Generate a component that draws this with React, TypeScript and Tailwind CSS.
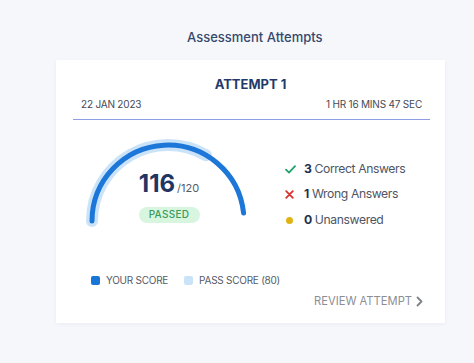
import React from "react";

// score gauge: half circle, radius 76, centre at (88, 86)
const CX = 88;
const CY = 86;
const R = 76;

function arcPath(fraction: number) {
  const a = Math.PI * (1 - fraction);
  const x = CX + R * Math.cos(a);
  const y = CY - R * Math.sin(a);
  return `M ${CX - R} ${CY} A ${R} ${R} 0 0 1 ${x.toFixed(2)} ${y.toFixed(2)}`;
}

function Gauge({ score, total, pass }: { score: number; total: number; pass: number }) {
  return (
    <div className="relative w-[176px] h-[100px] shrink-0">
      <svg className="absolute inset-0" width="176" height="100" viewBox="0 0 176 100">
        <path d={arcPath(pass / total)} fill="none" stroke="#cbe3f8" strokeWidth="12" strokeLinecap="round" />
        <path d={arcPath(score / total)} fill="none" stroke="#1c77d8" strokeWidth="5" strokeLinecap="round" />
      </svg>
      <div className="relative flex flex-col items-center pt-[37px] pl-[2px]">
        <div className="flex items-baseline">
          <span className="text-[24px] leading-[24px] font-bold text-[#1f3563]">{score}</span>
          <span className="ml-[2px] text-[11px] text-[#555b66]">/{total}</span>
        </div>
        <span className="mt-[10px] h-[16px] w-[61px] flex items-center justify-center rounded-full bg-[#d8f6df] text-[10px] tracking-[0.3px] font-medium text-[#3b9a5c]">
          PASSED
        </span>
      </div>
    </div>
  );
}

function ResultRow({ icon, count, label }: { icon: React.ReactNode; count: number; label: string }) {
  return (
    <div className="flex items-center h-[20px]">
      <span className="w-[19px] flex items-center">{icon}</span>
      <span className="text-[12.2px] tracking-[-0.4px] text-[#4f5563]">
        <b className="font-bold text-[#1f2f52]">{count}</b> {label}
      </span>
    </div>
  );
}

export default function App() {
  return (
    <div className="w-[474px] h-[363px] bg-[#f6f7fb] font-['Inter',sans-serif] pt-[27px]">
      <h1 className="ml-[187px] text-[13px] leading-[20px] font-medium text-[#35486e]">Assessment Attempts</h1>

      <div className="mt-[13px] ml-[56px] w-[389px] h-[263px] bg-white shadow-[0_1px_4px_rgba(60,70,110,0.06)] flex flex-col">
        <p className="pt-[14px] text-center text-[13px] leading-[20px] font-bold text-[#1f3a6b]">ATTEMPT 1</p>

        <div className="ml-[17px] mr-[15px] mt-[2px] border-b border-[#8e9ee6] pb-[7px]">
          <div className="flex justify-between px-[8px] text-[10px] tracking-[-0.2px] leading-[16px] text-[#454a55]">
            <span>22 JAN 2023</span>
            <span>1 HR 16 MINS 47 SEC</span>
          </div>
        </div>

        <div className="flex mt-[15px] ml-[24px]">
          <Gauge score={116} total={120} pass={80} />
          <div className="ml-[29px] mt-[24px] flex flex-col gap-[5.5px]">
            <ResultRow
              count={3}
              label="Correct Answers"
              icon={
                <svg width="11" height="9" viewBox="0 0 11 9">
                  <path d="M1 4.6 L4 7.6 L10 1.2" fill="none" stroke="#22a36b" strokeWidth="1.8" strokeLinecap="round" strokeLinejoin="round" />
                </svg>
              }
            />
            <ResultRow
              count={1}
              label="Wrong Answers"
              icon={
                <svg width="9" height="9" viewBox="0 0 9 9">
                  <path d="M1.2 1.2 L7.8 7.8 M7.8 1.2 L1.2 7.8" fill="none" stroke="#d8312f" strokeWidth="1.8" strokeLinecap="round" />
                </svg>
              }
            />
            <ResultRow
              count={0}
              label="Unanswered"
              icon={<span className="ml-[1px] w-[7px] h-[7px] rounded-full bg-[#e1b312]" />}
            />
          </div>
        </div>

        <div className="mt-[38px] ml-[35px] flex items-center text-[10px] tracking-[-0.25px] leading-[14px] text-[#545a66]">
          <span className="w-[9px] h-[9px] rounded-[2px] bg-[#1876d6]" />
          <span className="ml-[6px]">YOUR SCORE</span>
          <span className="ml-[16px] w-[9px] h-[9px] rounded-[2px] bg-[#cbe3f8]" />
          <span className="ml-[6px]">PASS SCORE (80)</span>
        </div>

        <div className="mt-[7px] pr-[22px] flex justify-end items-center text-[11.2px] leading-[14px] text-[#8b8e94]">
          <span>REVIEW ATTEMPT</span>
          <svg className="ml-[4px]" width="7" height="11" viewBox="0 0 7 11">
            <path d="M1.5 1.5 L5.5 5.5 L1.5 9.5" fill="none" stroke="#7f8288" strokeWidth="1.8" strokeLinecap="round" strokeLinejoin="round" />
          </svg>
        </div>
      </div>
    </div>
  );
}
